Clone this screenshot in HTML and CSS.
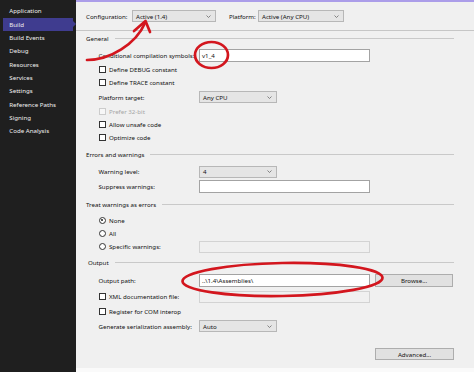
FILE: index.html
```html
<!DOCTYPE html>
<html lang="en">

<head>
    <meta charset="UTF-8">
    <title>Build - Project Properties</title>
    <link rel="stylesheet" href="styles.css">
</head>

<body>
    <aside class="sidebar">
        <ul>
            <li>Application</li>
            <li class="current">Build</li>
            <li>Build Events</li>
            <li>Debug</li>
            <li>Resources</li>
            <li>Services</li>
            <li>Settings</li>
            <li>Reference Paths</li>
            <li>Signing</li>
            <li>Code Analysis</li>
        </ul>
    </aside>

    <main class="page">
        <div class="toolbar">
            <span class="caption config">Configuration:</span>
            <div class="dropdown config-dd"><span>Active (1.4)</span><svg class="chev" width="5" height="3" viewBox="0 0 5 3"><path d="M0.5 0.5 L2.5 2.5 L4.5 0.5" /></svg></div>
            <span class="caption platform">Platform:</span>
            <div class="dropdown platform-dd"><span>Active (Any CPU)</span><svg class="chev" width="5" height="3" viewBox="0 0 5 3"><path d="M0.5 0.5 L2.5 2.5 L4.5 0.5" /></svg></div>
        </div>

        <div class="content">
            <!-- General -->
            <section class="group">
                <div class="group-head"><span>General</span></div>
                <div class="row field">
                    <span class="label">Conditional compilation symbols:</span>
                    <div class="textbox">v1_4</div>
                </div>
                <div class="row check"><span class="box"></span>Define DEBUG constant</div>
                <div class="row check"><span class="box"></span>Define TRACE constant</div>
                <div class="row field">
                    <span class="label">Platform target:</span>
                    <div class="dropdown"><span>Any CPU</span><svg class="chev" width="5" height="3" viewBox="0 0 5 3"><path d="M0.5 0.5 L2.5 2.5 L4.5 0.5" /></svg></div>
                </div>
                <div class="row check disabled"><span class="box"></span>Prefer 32-bit</div>
                <div class="row check"><span class="box"></span>Allow unsafe code</div>
                <div class="row check"><span class="box"></span>Optimize code</div>
            </section>

            <!-- Errors and warnings -->
            <section class="group">
                <div class="group-head"><span>Errors and warnings</span></div>
                <div class="row field">
                    <span class="label">Warning level:</span>
                    <div class="dropdown"><span>4</span><svg class="chev" width="5" height="3" viewBox="0 0 5 3"><path d="M0.5 0.5 L2.5 2.5 L4.5 0.5" /></svg></div>
                </div>
                <div class="row field">
                    <span class="label">Suppress warnings:</span>
                    <div class="textbox"></div>
                </div>
            </section>

            <!-- Treat warnings as errors -->
            <section class="group radios">
                <div class="group-head"><span>Treat warnings as errors</span></div>
                <div class="row check"><span class="radio on"></span>None</div>
                <div class="row check"><span class="radio"></span>All</div>
                <div class="row check">
                    <span class="label"><span class="radio"></span>Specific warnings:</span>
                    <div class="textbox disabled short"></div>
                </div>
            </section>

            <!-- Output -->
            <section class="group output">
                <div class="group-head"><span>Output</span></div>
                <div class="row field">
                    <span class="label">Output path:</span>
                    <div class="textbox">..\1.4\Assemblies\</div>
                    <button class="btn browse">Browse...</button>
                </div>
                <div class="row field">
                    <span class="label"><span class="box"></span>XML documentation file:</span>
                    <div class="textbox disabled short"></div>
                </div>
                <div class="row check"><span class="box"></span>Register for COM interop</div>
                <div class="row field">
                    <span class="label">Generate serialization assembly:</span>
                    <div class="dropdown"><span>Auto</span><svg class="chev" width="5" height="3" viewBox="0 0 5 3"><path d="M0.5 0.5 L2.5 2.5 L4.5 0.5" /></svg></div>
                </div>
            </section>

            <div class="actions">
                <button class="btn">Advanced...</button>
            </div>
        </div>
    </main>

    <!-- red hand-drawn marks over the screenshot -->
    <svg class="marks" width="474" height="372" viewBox="0 0 474 372">
        <path d="M87 60 C110 60 136 44 145 23" />
        <path d="M134 31 L145.5 21 L150 32" />
        <ellipse cx="211.5" cy="55" rx="16.5" ry="13" />
        <ellipse cx="282.5" cy="279.5" rx="100" ry="16.5" transform="rotate(-1 282.5 279.5)" />
    </svg>
</body>

</html>
```

FILE: styles.css
```css
* {
    margin: 0;
    padding: 0;
    box-sizing: border-box;
}

body {
    width: 474px;
    height: 372px;
    overflow: hidden;
    position: relative;
    display: flex;
    font-family: "Segoe UI", "Noto Sans", sans-serif;
    font-size: 6.15px;
    color: #111111;
    background: #f0f0f0;
}

/* Sidebar */
.sidebar {
    width: 76px;
    background: #1f1f1f;
    color: #f0f0f0;
    padding-top: 4.3px;
}

.sidebar li {
    list-style: none;
    height: 13.33px;
    line-height: 13.33px;
    padding-left: 9.3px;
    white-space: nowrap;
}

.sidebar li.current {
    position: relative;
    margin: 0 3px;
    padding-left: 6.3px;
    background: #3f3c8f;
}

.sidebar li.current::after {
    content: "";
    position: absolute;
    right: -3px;
    top: 3.5px;
    border-left: 3px solid #3f3c8f;
    border-top: 3px solid transparent;
    border-bottom: 3px solid transparent;
}

/* Page */
.page {
    flex: 1;
    border-top: 2px solid #ab9de9;
    box-shadow: inset 0 -4px #fafafa;
}

.toolbar {
    height: 29px;
    display: flex;
    align-items: center;
    padding-left: 10px;
    border-bottom: 1px solid #c6c6c6;
}

.caption.config {
    width: 46px;
}

.caption.platform {
    width: 29px;
    margin-left: 13px;
}

.content {
    padding: 1px 20px 0 10px;
}

/* Groups */
.group {
    display: flex;
    flex-direction: column;
}

.group + .group {
    margin-top: 4px;
}

.group-head {
    display: flex;
    align-items: center;
    height: 13px;
    margin-bottom: 3px;
}

.group-head::after {
    content: "";
    flex: 1;
    height: 1px;
    margin-left: 6px;
    background: #c9c9c9;
}

.group.radios .group-head {
    margin-bottom: 2px;
}

.group.output {
    margin-top: 3px;
}

.group.output .group-head {
    padding-left: 2px;
    margin-bottom: 3.5px;
}

.group.output .row.field {
    margin: 1.5px 0;
}

/* Rows */
.row {
    display: flex;
    align-items: center;
    padding-left: 12.5px;
    white-space: nowrap;
}

.row.check {
    height: 13.3px;
}

.row.field {
    height: 13px;
    margin: 1px 0;
}

.row .label {
    display: flex;
    align-items: center;
    width: 100.5px;
}

.row.disabled {
    color: #a6a6a6;
}

.box {
    width: 7px;
    height: 7px;
    margin-right: 3.5px;
    background: #ffffff;
    border: 1px solid #333333;
}

.row.disabled .box {
    border-color: #cccccc;
    background: #f7f7f7;
}

.radio {
    position: relative;
    width: 7px;
    height: 7px;
    margin-right: 3.5px;
    border-radius: 50%;
    background: #ffffff;
    border: 1px solid #333333;
}

.radio.on::after {
    content: "";
    position: absolute;
    left: 1.5px;
    top: 1.5px;
    width: 2px;
    height: 2px;
    border-radius: 50%;
    background: #1b1b1b;
}

/* Controls */
.textbox {
    width: 171px;
    height: 13px;
    line-height: 11px;
    padding-left: 2px;
    background: #ffffff;
    border: 1px solid #a3a3a3;
}

.textbox.disabled {
    background: #f0f0f0;
    border-color: #d3d3d3;
}

.textbox.short {
    height: 12px;
}

.dropdown {
    width: 78px;
    height: 12px;
    display: flex;
    align-items: center;
    justify-content: space-between;
    padding: 0 4px 0 3px;
    background: #e5e5e5;
    border: 1px solid #b7b7b7;
}

.config-dd {
    width: 84px;
}

.platform-dd {
    width: 86px;
}

.chev {
    fill: none;
    stroke: #6a6a6a;
    stroke-width: 0.8;
}

.btn {
    width: 78px;
    height: 13px;
    font: inherit;
    color: #111111;
    background: #e1e1e1;
    border: 1px solid #adadad;
}

.btn.browse {
    margin-left: 5px;
}

.actions {
    display: flex;
    justify-content: flex-end;
    margin-top: 14px;
}

.actions .btn {
    width: 79px;
    height: 12px;
}

/* Annotations */
.marks {
    position: absolute;
    top: 0;
    left: 0;
    pointer-events: none;
    fill: none;
    stroke: #d3161e;
    stroke-width: 2.7;
    stroke-linecap: round;
    stroke-linejoin: round;
}
```
